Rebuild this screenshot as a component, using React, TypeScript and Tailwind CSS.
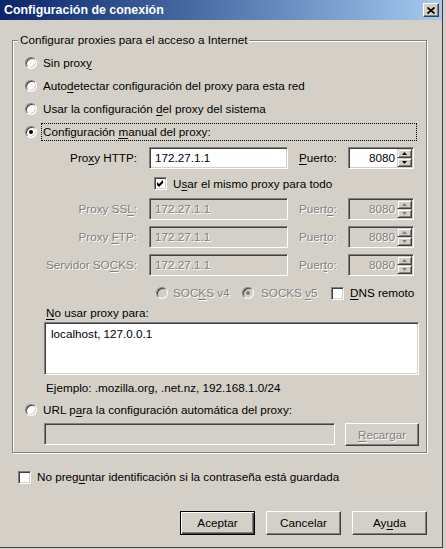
import React from 'react';

const dis = 'text-[#808080] [text-shadow:1px_1px_0_#fff]';
const sunken =
  'border border-t-[#808080] border-l-[#808080] border-b-white border-r-white shadow-[inset_1px_1px_0_#404040,inset_-1px_-1px_0_#d4d0c8]';
const raised =
  'border border-t-white border-l-white border-b-[#404040] border-r-[#404040] shadow-[inset_-1px_-1px_0_#808080] bg-[#d4d0c8]';

function U({ children }: { children: React.ReactNode }) {
  return <span className="underline decoration-1 underline-offset-[2px]">{children}</span>;
}

function Radio({ checked, disabled }: { checked?: boolean; disabled?: boolean }) {
  return (
    <span
      className={`flex h-[12px] w-[12px] shrink-0 items-center justify-center rounded-full border border-t-[#808080] border-l-[#808080] border-b-white border-r-white shadow-[inset_1px_1px_0_#404040,inset_-1px_-1px_0_#d4d0c8] ${
        disabled ? 'bg-[#d4d0c8]' : 'bg-white'
      }`}
    >
      {checked && <span className={`h-[4px] w-[4px] rounded-full ${disabled ? 'bg-[#808080]' : 'bg-black'}`} />}
    </span>
  );
}

function Check({ checked }: { checked?: boolean }) {
  return (
    <span className={`flex h-[13px] w-[13px] shrink-0 items-center justify-center bg-white ${sunken}`}>
      {checked && (
        <svg width="7" height="7" viewBox="0 0 7 7">
          <polygon points="0,2 2,4 6,0 6,3 2,7 0,5" fill="black" />
        </svg>
      )}
    </span>
  );
}

function SpinBtn({ up, disabled }: { up?: boolean; disabled?: boolean }) {
  return (
    <div className="flex h-[9px] w-[15px] items-center justify-center border border-t-[#d4d0c8] border-l-[#d4d0c8] border-b-[#404040] border-r-[#404040] bg-[#d4d0c8] shadow-[inset_1px_1px_0_#fff,inset_-1px_-1px_0_#808080]">
      <svg width="5" height="3" viewBox="0 0 5 3">
        <polygon points={up ? '0,3 5,3 2.5,0' : '0,0 5,0 2.5,3'} fill={disabled ? '#808080' : 'black'} />
      </svg>
    </div>
  );
}

function Spinner({ disabled }: { disabled?: boolean }) {
  return (
    <div className={`flex h-[22px] w-[66px] p-[1px] ${sunken} ${disabled ? 'bg-[#d4d0c8]' : 'bg-white'}`}>
      <div className={`flex flex-1 items-center justify-end pr-[2px] ${disabled ? dis : ''}`}>
        <span>8080</span>
      </div>
      <div className="flex w-[15px] flex-col">
        <SpinBtn up disabled={disabled} />
        <SpinBtn disabled={disabled} />
      </div>
    </div>
  );
}

function ProxyRow({
  label,
  port,
  disabled,
  className = '',
}: {
  label: React.ReactNode;
  port: React.ReactNode;
  disabled?: boolean;
  className?: string;
}) {
  return (
    <div className={`flex h-[22px] items-center ${className}`}>
      <span className={`w-[124px] text-right ${disabled ? dis : ''}`}>{label}</span>
      <div
        className={`ml-[12px] flex h-[22px] w-[139px] items-center pl-[5px] ${sunken} ${
          disabled ? 'bg-[#d4d0c8] ' + dis : 'bg-white'
        }`}
      >
        <span>172.27.1.1</span>
      </div>
      <span className={`ml-[11px] w-[49px] ${disabled ? dis : ''}`}>{port}</span>
      <Spinner disabled={disabled} />
    </div>
  );
}

export default function App() {
  return (
    <div className="h-[549px] w-[446px] overflow-hidden bg-[#d4d0c8] font-['Liberation_Sans',Arial,sans-serif] text-[11.7px] leading-[14px] text-black">
      <div className="flex h-[548px] w-[443px] flex-col border-r border-b border-r-[#404040] border-b-[#404040]">
        {/* Title bar */}
        <div className="flex h-[20px] shrink-0 items-center bg-linear-to-r from-[#0a246a] to-[#a6caf0] pl-[4px] pr-[3px]">
          <span className="flex-1 text-[12.4px] font-bold text-white">Configuración de conexión</span>
          <div className={`flex h-[14px] w-[16px] items-center justify-center ${raised}`}>
            <svg width="8" height="7" viewBox="0 0 8 7">
              <path d="M0.5 0.5 L7.5 6.5 M7.5 0.5 L0.5 6.5" stroke="black" strokeWidth="1.7" />
            </svg>
          </div>
        </div>

        {/* Group box */}
        <div className="ml-[12px] mt-[20px] flex h-[413px] w-[415px] flex-col border border-[#808080] shadow-[1px_1px_0_#fff,inset_1px_1px_0_#fff]">
          <span className="-mt-[8px] ml-[5px] self-start bg-[#d4d0c8] px-[2px] leading-[14px]">
            Configurar proxies para el acceso a Internet
          </span>

          <div className="mt-[4px] flex flex-col">
            <div className="flex h-[23px] items-center pl-[12px]">
              <Radio />
              <span className="ml-[6px]">
                Sin prox<U>y</U>
              </span>
            </div>
            <div className="flex h-[23px] items-center pl-[12px]">
              <Radio />
              <span className="ml-[6px]">
                Auto<U>d</U>etectar configuración del proxy para esta red
              </span>
            </div>
            <div className="flex h-[23px] items-center pl-[12px]">
              <Radio />
              <span className="ml-[6px]">
                Usar la configuración <U>d</U>el proxy del sistema
              </span>
            </div>
            <div className="flex h-[23px] items-center pl-[12px]">
              <Radio checked />
              <div className="ml-[4px] flex h-[18px] w-[376px] items-center border border-dotted border-black pl-[1px]">
                <span>
                  Configuración <U>m</U>anual del proxy:
                </span>
              </div>
            </div>
          </div>

          <ProxyRow
            className="mt-[4px]"
            label={
              <>
                Pro<U>x</U>y HTTP:
              </>
            }
            port={
              <>
                <U>P</U>uerto:
              </>
            }
          />

          <div className="flex h-[29px] items-center pl-[141px]">
            <Check checked />
            <span className="ml-[6px]">
              U<U>s</U>ar el mismo proxy para todo
            </span>
          </div>

          <ProxyRow
            disabled
            label={
              <>
                Proxy SS<U>L</U>:
              </>
            }
            port={
              <>
                Puert<U>o</U>:
              </>
            }
          />
          <ProxyRow
            disabled
            className="mt-[6px]"
            label={
              <>
                Proxy <U>F</U>TP:
              </>
            }
            port={
              <>
                Puer<U>t</U>o:
              </>
            }
          />
          <ProxyRow
            disabled
            className="mt-[6px]"
            label={
              <>
                Servidor SO<U>C</U>KS:
              </>
            }
            port={
              <>
                Puer<U>t</U>o:
              </>
            }
          />

          <div className="mt-[5px] flex h-[24px] items-center pl-[143px]">
            <div className="flex w-[86px] items-center">
              <Radio disabled />
              <span className={`ml-[5px] ${dis}`}>
                SOC<U>K</U>S v4
              </span>
            </div>
            <div className="flex w-[89px] items-center">
              <Radio disabled checked />
              <span className={`ml-[7px] ${dis}`}>
                SOCKS <U>v</U>5
              </span>
            </div>
            <Check />
            <span className="ml-[6px]">
              <U>D</U>NS remoto
            </span>
          </div>

          <div className="flex h-[16px] items-center pl-[33px]">
            <span>
              <U>N</U>o usar proxy para:
            </span>
          </div>
          <div className={`ml-[31px] mt-[1px] h-[53px] w-[375px] bg-white pl-[6px] pt-[4px] ${sunken}`}>
            localhost, 127.0.0.1
          </div>

          <div className="mt-[5px] flex h-[16px] items-center pl-[33px]">
            <span>Ejemplo: .mozilla.org, .net.nz, 192.168.1.0/24</span>
          </div>

          <div className="mt-[2px] flex h-[24px] items-center pl-[12px]">
            <Radio />
            <span className="ml-[6px]">
              URL p<U>a</U>ra la configuración automática del proxy:
            </span>
          </div>

          <div className="mt-[1px] flex items-start pl-[31px]">
            <div className={`h-[22px] w-[291px] bg-[#d4d0c8] ${sunken}`} />
            <button
              type="button"
              className={`ml-[10px] flex h-[23px] w-[74px] items-center justify-center ${raised} ${dis}`}
            >
              <span>
                <U>R</U>ecargar
              </span>
            </button>
          </div>
        </div>

        {/* Checkbox below group */}
        <div className="mt-[14px] flex h-[20px] items-center pl-[18px]">
          <Check />
          <span className="ml-[6px]">
            No preg<U>u</U>ntar identificación si la contraseña está guardada
          </span>
        </div>

        {/* Buttons */}
        <div className="mt-[24px] flex gap-[11px] pl-[180px]">
          <button
            type="button"
            className="flex h-[24px] w-[75px] items-center justify-center border border-black bg-[#d4d0c8] shadow-[inset_1px_1px_0_#fff,inset_-1px_-1px_0_#404040,inset_-2px_-2px_0_#808080]"
          >
            <span>Aceptar</span>
          </button>
          <button type="button" className={`flex h-[24px] w-[75px] items-center justify-center ${raised}`}>
            <span>Cancelar</span>
          </button>
          <button type="button" className={`flex h-[24px] w-[75px] items-center justify-center ${raised}`}>
            <span>
              Ay<U>u</U>da
            </span>
          </button>
        </div>
      </div>
    </div>
  );
}
